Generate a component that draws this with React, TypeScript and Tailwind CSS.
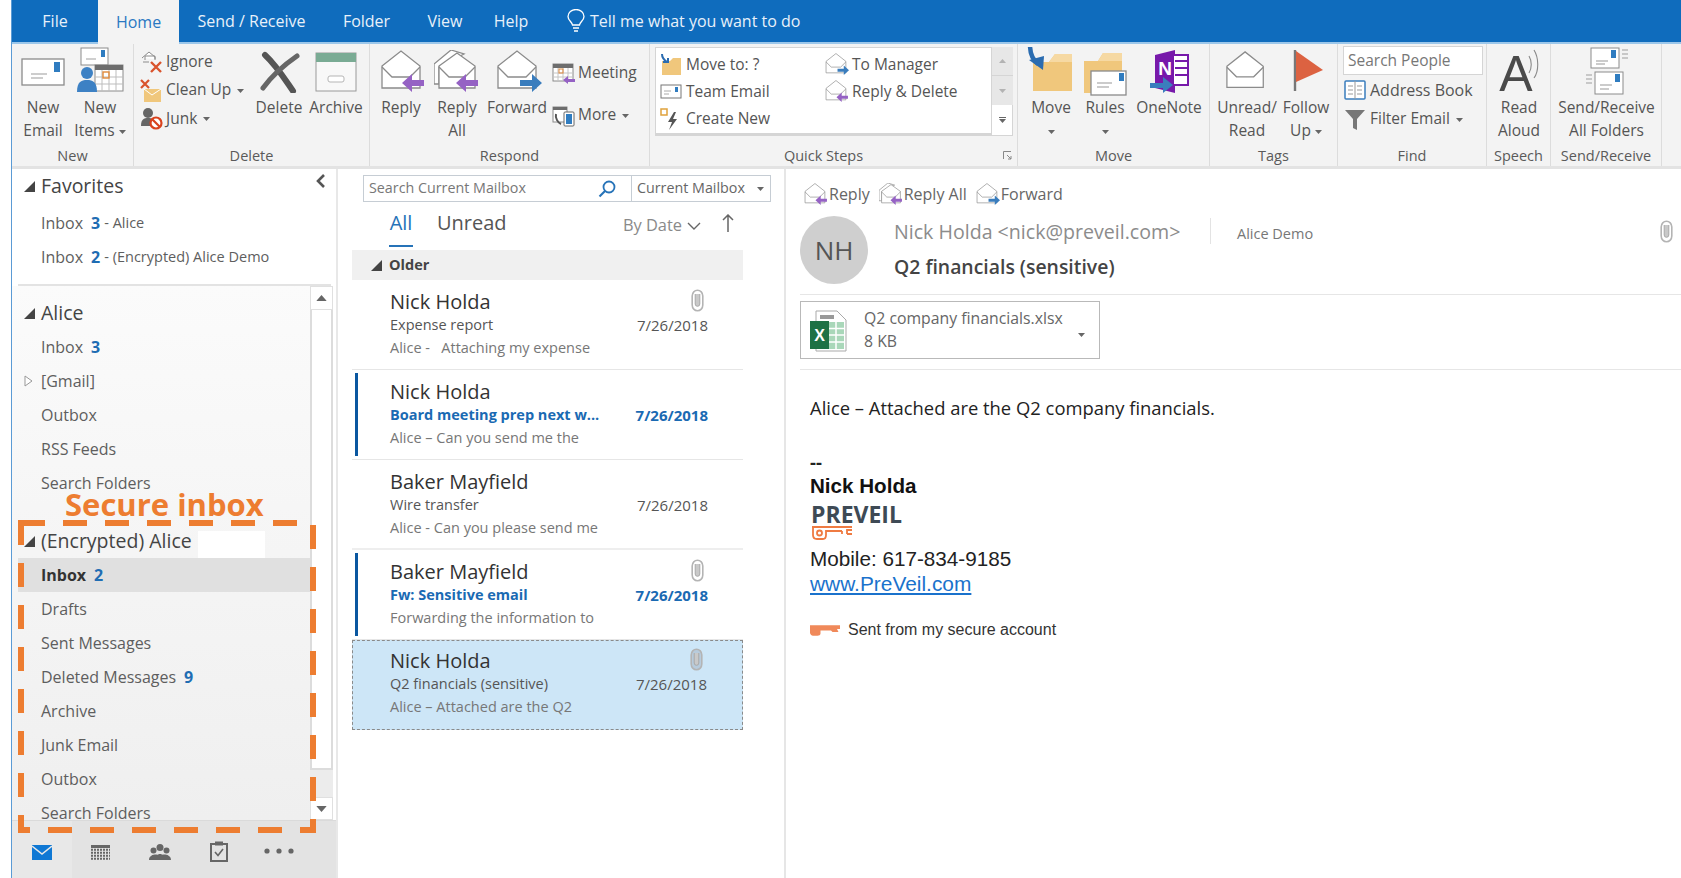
import React from "react";

const GRAY = "#8b8b8b";

function OpenEnv({ w = 46, h = 44, color = "#9562c4", dir = "left", double = false }: { w?: number; h?: number; color?: string; dir?: "left" | "right"; double?: boolean }) {
  return (
    <svg width={w} height={h} viewBox="0 0 46 44" className="shrink-0">
      {double && <path d="M0 14 L17 0 L30 4 L5 17 V34 H0 Z" fill="#fff" stroke={GRAY} strokeWidth="1.3" />}
      <path d={double ? "M5 16 L23 3 L41 16 V38 H5 Z" : "M2 16 L21 1 L40 16 V38 H2 Z"} fill="#fff" stroke={GRAY} strokeWidth="1.3" />
      <path d={double ? "M5 17 L15 27 H31 L41 17" : "M2 17 L12 27 H30 L40 17"} fill="none" stroke={GRAY} strokeWidth="1.3" />
      {dir === "left" ? (
        <path d="M22 33 L32 24 V30 H44 V36 H32 V42 Z" fill={color} />
      ) : (
        <path d="M46 33 L36 24 V30 H24 V36 H36 V42 Z" fill={color} />
      )}
    </svg>
  );
}

function ClosedEnv({ w = 44, h = 28 }: { w?: number; h?: number }) {
  return (
    <svg width={w} height={h} viewBox="0 0 44 28" className="shrink-0">
      <rect x="1" y="1" width="42" height="26" fill="#fff" stroke={GRAY} strokeWidth="1.3" />
      <rect x="33" y="4" width="6" height="10" fill="#2f7cc0" />
      <path d="M10 16 H26 M10 20 H22" stroke="#bdbdbd" strokeWidth="1.4" />
    </svg>
  );
}

function NewItemsIcon() {
  return (
    <svg width="48" height="50" viewBox="0 0 48 50">
      <rect x="5" y="1" width="27" height="17" fill="#fff" stroke={GRAY} />
      <rect x="25" y="3" width="4" height="7" fill="#2f7cc0" />
      <path d="M10 12 H20" stroke="#bbb" strokeWidth="1.4" />
      <rect x="19" y="18" width="28" height="26" fill="#fff" stroke={GRAY} />
      <rect x="19" y="18" width="28" height="5" fill="#6d6d6d" />
      <path d="M19 30 H47 M19 37 H47 M26 23 V44 M33 23 V44 M40 23 V44" stroke="#bdbdbd" />
      <rect x="27" y="25" width="6" height="6" fill="none" stroke="#e08a3c" strokeWidth="1.4" />
      <circle cx="11" cy="26" r="6" fill="#3d81c4" />
      <path d="M1 45 C1 35 5 33 11 33 C17 33 21 35 21 45 Z" fill="#3d81c4" />
    </svg>
  );
}

function Small({ children }: { children: React.ReactNode }) {
  return (
    <svg width="24" height="24" viewBox="0 0 24 24" className="shrink-0">
      {children}
    </svg>
  );
}

const IgnoreIcon = () => (
  <Small>
    <path d="M2 9 L9 3 L15 8 V10" fill="#fff" stroke={GRAY} />
    <path d="M5 11 V7 H15 V11 M3 13 H9" fill="none" stroke={GRAY} />
    <path d="M11 13 L21 23 M21 13 L11 23" stroke="#d9532c" strokeWidth="2.4" />
  </Small>
);
const CleanIcon = () => (
  <Small>
    <path d="M4 11 H21 V24 H4 Z" fill="#f0c77c" />
    <path d="M4 11 L12 17 L21 11" fill="none" stroke="#fff" strokeWidth="1" />
    <path d="M1 2 L9 10 M9 2 L1 10" stroke="#d9532c" strokeWidth="2.2" />
  </Small>
);
const JunkIcon = () => (
  <Small>
    <circle cx="8" cy="7" r="5" fill="#666" />
    <path d="M1 20 C1 13 4 12 8 12 C12 12 15 13 15 20 Z" fill="#666" />
    <circle cx="16" cy="17" r="5.5" fill="#fff" stroke="#d9431e" strokeWidth="2.2" />
    <path d="M12.5 13.5 L19.5 20.5" stroke="#d9431e" strokeWidth="2.2" />
  </Small>
);
const MeetingIcon = () => (
  <Small>
    <rect x="1" y="3" width="20" height="17" fill="#fff" stroke="#8a8a8a" />
    <rect x="1" y="3" width="20" height="4" fill="#6d6d6d" />
    <path d="M1 12 H21 M1 16 H21 M6 7 V20 M11 7 V20 M16 7 V20" stroke="#c4c4c4" />
    <rect x="7" y="8" width="4" height="4" fill="none" stroke="#e08a3c" />
    <path d="M11 19 L16 15 V18 H23 V21 H16 V23 Z" fill="#9562c4" />
  </Small>
);
const MoreIcon = () => (
  <Small>
    <rect x="1" y="4" width="14" height="15" fill="#fff" stroke="#8a8a8a" />
    <rect x="1" y="4" width="14" height="3" fill="#6d6d6d" />
    <path d="M4 11 C3 15 6 20 9 21" fill="none" stroke="#555" strokeWidth="2" />
    <rect x="12" y="9" width="10" height="14" rx="1" fill="#fff" stroke="#666" />
    <rect x="14" y="11" width="6" height="10" fill="#2f7cc0" />
  </Small>
);

function MoveIcon() {
  return (
    <svg width="52" height="50" viewBox="0 0 52 50">
      <path d="M8 44 V15 H24 L30 7 H47 V44 Z" fill="#f0c77c" />
      <path d="M30 7 H47 V15 H24 Z" fill="#f6d9a3" />
      <path d="M5 -2 C5 8 8 13 13 17" fill="none" stroke="#2b6cb0" strokeWidth="4.5" />
      <path d="M4 13 L18 23 L19 9 Z" fill="#2b6cb0" />
    </svg>
  );
}
function RulesIcon() {
  return (
    <svg width="46" height="50" viewBox="0 0 46 50">
      <path d="M2 46 V14 H16 L21 6 H40 V46 Z" fill="#f0c77c" />
      <path d="M21 6 H40 V14 H16 Z" fill="#f6d9a3" />
      <rect x="9" y="24" width="35" height="24" fill="#fff" stroke="#8a8a8a" strokeWidth="1.3" />
      <rect x="37" y="26" width="5" height="8" fill="#2f7cc0" />
      <path d="M15 36 H30 M15 40 H27" stroke="#bbb" strokeWidth="1.4" />
    </svg>
  );
}
function OneNoteIcon() {
  return (
    <svg width="44" height="50" viewBox="0 0 44 50">
      <path d="M8 8 L28 3 V46 L8 41 Z" fill="#7719aa" />
      <path d="M26 8 H41 V38 H26 Z" fill="#fff" stroke="#7719aa" strokeWidth="2" />
      <path d="M28 14 H41 M28 21 H41 M28 28 H41" stroke="#7719aa" strokeWidth="2" />
      <text x="18" y="28" textAnchor="middle" fontFamily="Liberation Sans" fontWeight="700" fontSize="19" fill="#fff">N</text>
      <path d="M3 36 H16 V30 L26 38 L16 46 V41 H3 Z" fill="#3a7dbd" />
    </svg>
  );
}
function FlagIcon() {
  return (
    <svg width="34" height="44" viewBox="0 0 34 44" className="ml-[6px]">
      <path d="M3 0 V41" stroke="#777" strokeWidth="2.4" />
      <path d="M4 1 L31 20 L4 32 Z" fill="#dc6241" />
    </svg>
  );
}
function ReadAloudIcon() {
  return (
    <svg width="48" height="50" viewBox="0 0 48 50" overflow="visible">
      <text x="21" y="44" textAnchor="middle" fontFamily="Liberation Sans" fontSize="50" fill="#4a4a4a">A</text>
      <path d="M34 9 C37 14 37 21 34 26 M39 3 C44 11 44 24 39 31" fill="none" stroke="#888" strokeWidth="1.1" />
    </svg>
  );
}
function SendReceiveIcon() {
  return (
    <svg width="50" height="50" viewBox="0 0 50 50">
      <rect x="9" y="1" width="28" height="20" fill="#fff" stroke={GRAY} />
      <rect x="29" y="3" width="5" height="8" fill="#2f7cc0" />
      <path d="M14 14 H26 M14 17 H23 M40 3 H46 M40 7 H46 M40 11 H46" stroke="#bbb" strokeWidth="1.3" />
      <rect x="13" y="25" width="28" height="22" fill="#fff" stroke={GRAY} />
      <rect x="33" y="27" width="5" height="8" fill="#2f7cc0" />
      <path d="M18 38 H30 M18 42 H27 M4 28 H10 M4 32 H10 M4 36 H10" stroke="#bbb" strokeWidth="1.3" />
    </svg>
  );
}
function ArchiveIcon() {
  return (
    <svg width="42" height="40" viewBox="0 0 42 40">
      <rect x="1" y="1" width="40" height="38" fill="#f8f8f8" stroke="#9a9a9a" />
      <rect x="1" y="1" width="40" height="9" fill="#7aab94" />
      <rect x="13" y="24" width="16" height="6" rx="2" fill="#fff" stroke="#b5b5b5" />
    </svg>
  );
}
function DeleteIcon() {
  return (
    <svg width="42" height="42" viewBox="0 0 42 42">
      <path d="M7 4 C18 14 26 27 35 40" stroke="#555" strokeWidth="6" fill="none" strokeLinecap="round" />
      <path d="M39 5 C26 14 13 26 5 37" stroke="#666" strokeWidth="5" fill="none" strokeLinecap="round" />
    </svg>
  );
}
const Caret = ({ cls = "" }: { cls?: string }) => (
  <svg width="7" height="4" viewBox="0 0 7 4" className={`inline-block ${cls}`}>
    <path d="M0 0 H7 L3.5 4 Z" fill="#666" />
  </svg>
);

function Big({ w, icon, lines, iconCls = "" }: { w: string; icon: React.ReactNode; lines: React.ReactNode[]; iconCls?: string }) {
  return (
    <div className={`${w} flex flex-col items-center shrink-0`}>
      <div className={`h-[49px] flex items-center justify-center ${iconCls}`}>{icon}</div>
      {lines.map((l, i) => (
        <div key={i} className="leading-[23px] whitespace-nowrap text-center">
          {l}
        </div>
      ))}
    </div>
  );
}

function Group({ w, label, children, last = false, launcher = false, labelCls = "" }: { w: string; label: string; children: React.ReactNode; last?: boolean; launcher?: boolean; labelCls?: string }) {
  return (
    <div className={`${w} h-full flex flex-col shrink-0 relative ${last ? "" : "border-r border-[#dcdcdc]"}`}>
      <div className="flex-1 flex pt-[3px]">{children}</div>
      <div className={`h-[22px] leading-[23px] text-center text-[14.5px] text-[#5a5a5a] ${labelCls}`}>{label}</div>
      {launcher && (
        <svg width="9" height="9" viewBox="0 0 9 9" className="absolute right-[5px] bottom-[6px]">
          <path d="M0.5 8 V0.5 H8 M4 4 L8 8 M8 5 V8 H5" fill="none" stroke="#888" />
        </svg>
      )}
    </div>
  );
}

function Mini({ icon, children, cls = "" }: { icon: React.ReactNode; children: React.ReactNode; cls?: string }) {
  return (
    <div className={`flex items-center h-[27px] gap-[2px] whitespace-nowrap ${cls}`}>
      {icon}
      <span>{children}</span>
    </div>
  );
}

function Ribbon() {
  return (
    <div className="h-[122px] bg-[#f3f3f3] flex text-[15.5px] text-[#555] shrink-0">
      <Group w="w-[122px]" label="New">
        <div className="flex pl-[5px]">
          <Big w="w-[52px]" icon={<ClosedEnv />} lines={["New", "Email"]} />
          <Big w="w-[62px]" icon={<NewItemsIcon />} lines={["New", <>Items <Caret cls="align-middle" /></>]} />
        </div>
      </Group>
      <Group w="w-[236px]" label="Delete">
        <div className="w-[120px] pl-[6px] shrink-0">
          <Mini icon={<IgnoreIcon />} cls="h-[28.5px]">Ignore</Mini>
          <Mini icon={<CleanIcon />} cls="h-[28.5px]">Clean Up <Caret cls="align-middle ml-[2px]" /></Mini>
          <Mini icon={<JunkIcon />} cls="h-[28.5px]">Junk <Caret cls="align-middle ml-[2px]" /></Mini>
        </div>
        <Big w="w-[50px]" icon={<DeleteIcon />} lines={["Delete"]} />
        <Big w="w-[64px]" icon={<ArchiveIcon />} lines={["Archive"]} />
      </Group>
      <Group w="w-[280px]" label="Respond">
        <div className="flex pl-[3px]">
          <Big w="w-[56px]" icon={<OpenEnv />} lines={["Reply"]} iconCls="ml-[3px]" />
          <Big w="w-[56px]" icon={<OpenEnv double />} lines={["Reply", "All"]} />
          <Big w="w-[64px]" icon={<OpenEnv dir="right" color="#3a7dbd" />} lines={["Forward"]} iconCls="ml-[3px]" />
          <div className="pl-[3px] pt-[12px]">
            <Mini icon={<MeetingIcon />} cls="mb-[15px]">Meeting</Mini>
            <Mini icon={<MoreIcon />}>More <Caret cls="align-middle ml-[2px]" /></Mini>
          </div>
        </div>
      </Group>
      <Group w="w-[368px]" label="Quick Steps" launcher labelCls="pr-[20px]">
        <div className="ml-[5px] w-[358px] h-[89px] flex">
          <div className="flex-1 bg-white border border-[#d5d5d5] border-b-[3px] grid grid-cols-[166px_1fr] content-start pt-[3px] pl-[3px] text-[15.5px]">
            <Mini icon={<Small><path d="M3 8 H11 L14 5 H22 V22 H3 Z" fill="#f0c77c" /><path d="M3 1 C3 5 5 7 8 9 M4 9 H9 V5" fill="none" stroke="#2b6cb0" strokeWidth="2" /></Small>} cls="gap-[3px]">Move to: ?</Mini>
            <Mini icon={<OpenEnv w={24} h={23} dir="right" color="#3a7dbd" />} cls="gap-[3px]">To Manager</Mini>
            <Mini icon={<Small><rect x="2" y="5" width="20" height="13" fill="#fff" stroke="#777" /><rect x="16" y="7" width="3" height="5" fill="#2f7cc0" /><path d="M5 11 H12 M5 14 H10" stroke="#aaa" /></Small>} cls="gap-[3px]">Team Email</Mini>
            <Mini icon={<OpenEnv w={24} h={23} />} cls="gap-[3px]">Reply &amp; Delete</Mini>
            <Mini icon={<Small><rect x="2" y="2" width="6" height="6" fill="none" stroke="#e0a23c" strokeWidth="1.5" /><path d="M15 5 L9 15 H13 L10 23 L18 12 H14 L17 5 Z" fill="#555" /></Small>} cls="gap-[3px]">Create New</Mini>
          </div>
          <div className="w-[21px] flex flex-col">
            <div className="h-[29px] bg-[#e7e7e7] border-b border-[#d5d5d5] flex items-center justify-center"><Caret cls="rotate-180 opacity-40" /></div>
            <div className="h-[29px] bg-[#e7e7e7] flex items-center justify-center"><Caret cls="opacity-40" /></div>
            <div className="h-[31px] bg-white border-b border-r border-[#d5d5d5] flex flex-col gap-[1px] items-center justify-center">
              <div className="w-[7px] h-[1px] bg-[#666]" />
              <Caret />
            </div>
          </div>
        </div>
      </Group>
      <Group w="w-[192px]" label="Move">
        <div className="flex pl-[5px]">
          <Big w="w-[56px]" icon={<MoveIcon />} lines={["Move", <Caret />]} />
          <Big w="w-[52px]" icon={<RulesIcon />} lines={["Rules", <Caret />]} />
          <Big w="w-[76px]" icon={<OneNoteIcon />} lines={["OneNote"]} />
        </div>
      </Group>
      <Group w="w-[128px]" label="Tags">
        <div className="flex pl-[4px]">
          <Big w="w-[66px]" icon={<OpenEnv w={44} h={44} color="transparent" />} lines={["Unread/", "Read"]} />
          <Big w="w-[52px]" icon={<FlagIcon />} lines={["Follow", <>Up <Caret cls="align-middle" /></>]} />
        </div>
      </Group>
      <Group w="w-[149px]" label="Find">
        <div className="pl-[5px]">
          <div className="w-[140px] h-[29px] -mt-[1px] bg-white border border-[#d5d5d5] px-[4px] leading-[26px] text-[#777] text-[15.5px]">Search People</div>
          <Mini icon={<Small><rect x="2" y="3" width="20" height="18" rx="1" fill="#fff" stroke="#3a7dbd" strokeWidth="1.5" /><path d="M12 3 V21 M5 8 H10 M5 12 H10 M5 16 H10 M14 8 H19 M14 12 H19 M14 16 H19" stroke="#999" /></Small>} cls="mt-[1px] gap-[3px] text-[16px]">Address Book</Mini>
          <Mini icon={<Small><path d="M2 3 H22 L14 12 V23 L10 21 V12 Z" fill="#777" /></Small>} cls="gap-[3px] mt-[2px]">Filter Email <Caret cls="align-middle ml-[2px]" /></Mini>
        </div>
      </Group>
      <Group w="w-[64px]" label="Speech">
        <Big w="w-[64px]" icon={<ReadAloudIcon />} lines={["Read", "Aloud"]} />
      </Group>
      <Group w="w-[111px]" label="Send/Receive">
        <Big w="w-[111px]" icon={<SendReceiveIcon />} lines={["Send/Receive", "All Folders"]} />
      </Group>
    </div>
  );
}

function TabBar() {
  return (
    <div className="h-[44px] bg-[#0f6cbd] border-b-2 border-[#9cc7ea] flex text-[16px] text-[#e8f1fa] shrink-0">
      <div className="w-[86px] h-[42px] flex items-center justify-center">File</div>
      <div className="w-[81px] h-[44px] bg-[#f3f3f3] text-[#2a78c2] flex items-center justify-center">Home</div>
      <div className="w-[145px] flex items-center justify-center">Send / Receive</div>
      <div className="w-[85px] flex items-center justify-center">Folder</div>
      <div className="w-[72px] flex items-center justify-center">View</div>
      <div className="w-[60px] flex items-center justify-center">Help</div>
      <div className="ml-[25px] flex items-center gap-[4px]">
        <svg width="20" height="24" viewBox="0 0 20 24">
          <path d="M6.5 16 C6 12.5 2 11.5 2 7.5 A8 7 0 0 1 18 7.5 C18 11.5 14 12.5 13.5 16 Z" fill="none" stroke="#fff" strokeWidth="1.3" />
          <path d="M7 19 H13 M8 22 H12" stroke="#fff" strokeWidth="1.4" />
        </svg>
        <span>Tell me what you want to do</span>
      </div>
    </div>
  );
}

function Tri() {
  return (
    <svg width="11" height="11" viewBox="0 0 11 11" className="shrink-0">
      <path d="M11 0 V11 H0 Z" fill="#444" />
    </svg>
  );
}

const Count = ({ n }: { n: number }) => <span className="font-bold text-[#1f6db3] ml-[8px]">{n}</span>;

function Head({ children, extra }: { children: React.ReactNode; extra?: React.ReactNode }) {
  return (
    <div className="h-[34px] flex items-center pl-[12px] text-[19.5px] text-[#444] gap-[6px] shrink-0">
      <Tri />
      <span>{children}</span>
      {extra}
    </div>
  );
}
function Item({ children, sel = false, gmail = false }: { children: React.ReactNode; sel?: boolean; gmail?: boolean }) {
  return (
    <div className={`h-[34px] flex items-center shrink-0 text-[16px] whitespace-nowrap ${sel ? "bg-[#e0e0e0] ml-[6px] pl-[23px] text-[#333] font-bold" : "pl-[29px] text-[#5e5e5e]"} relative`}>
      {gmail && (
        <svg width="9" height="12" viewBox="0 0 9 12" className="absolute left-[12px]">
          <path d="M1 1 L8 6 L1 11 Z" fill="#fff" stroke="#999" />
        </svg>
      )}
      {children}
    </div>
  );
}

function Nav() {
  return (
    <div className="w-[326px] shrink-0 flex flex-col border-r-2 border-[#e8e8e8] h-full">
      <div className="h-[115px] shrink-0 relative">
        <div className="h-[36px]"><Head>Favorites</Head></div>
        <svg width="10" height="14" viewBox="0 0 10 14" className="absolute right-[10px] top-[5px]">
          <path d="M8 1 L2 7 L8 13" fill="none" stroke="#555" strokeWidth="2.6" />
        </svg>
        <div className="pt-[1px]">
          <Item>Inbox<Count n={3} /><span className="text-[14.5px] ml-[4px]">- Alice</span></Item>
          <Item>Inbox<Count n={2} /><span className="text-[14.5px] ml-[4px]">- (Encrypted) Alice Demo</span></Item>
        </div>
      </div>
      <div className="h-[2px] bg-[#e3e3e3] ml-[6px] mr-[5px] shrink-0" />
      <div className="flex-1 flex min-h-0">
        <div className="w-[298px] bg-linear-to-b from-[#fbfbfb] to-[#efefef] overflow-hidden pt-[10px] flex flex-col shrink-0">
          <Head>Alice</Head>
          <Item>Inbox<Count n={3} /></Item>
          <Item gmail>[Gmail]</Item>
          <Item>Outbox</Item>
          <Item>RSS Feeds</Item>
          <Item>Search Folders</Item>
          <div className="h-[24px] shrink-0" />
          <Head extra={<span className="w-[67px] h-[27px] bg-white self-end" />}>(Encrypted) Alice</Head>
          <Item sel>Inbox<Count n={2} /></Item>
          <Item>Drafts</Item>
          <Item>Sent Messages</Item>
          <Item>Deleted Messages<Count n={9} /></Item>
          <Item>Archive</Item>
          <Item>Junk Email</Item>
          <Item>Outbox</Item>
          <Item>Search Folders</Item>
        </div>
        <div className="w-[23px] flex flex-col shrink-0 bg-[#ececec]">
          <div className="h-[24px] bg-white border border-[#e0e0e0] flex items-center justify-center"><Caret cls="rotate-180 scale-150" /></div>
          <div className="flex-1 bg-white border-x-2 border-b-2 border-[#dcdcdc]" />
          <div className="h-[27px]" />
          <div className="h-[23px] bg-white border border-[#e0e0e0] flex items-center justify-center"><Caret cls="scale-150" /></div>
        </div>
      </div>
      <div className="h-[58px] bg-[#e3e3e3] flex shrink-0 border-t border-[#dadada]">
        <div className="w-[60px] bg-[#e8e8e8] flex justify-center pt-[24px]">
          <svg width="20" height="15" viewBox="0 0 20 15"><rect width="20" height="15" fill="#0f78d4" /><path d="M0 1 L10 9 L20 1" fill="none" stroke="#e8e8e8" strokeWidth="1.5" /></svg>
        </div>
        <div className="w-[56px] flex justify-center pt-[24px]">
          <svg width="19" height="15" viewBox="0 0 19 15"><rect width="19" height="3" fill="#666" />{[4, 7, 10, 13].map((y) => <path key={y} d={`M0 ${y + 0.8} H19`} stroke="#666" strokeWidth="2" strokeDasharray="2 1" />)}</svg>
        </div>
        <div className="w-[64px] flex justify-center pt-[23px]">
          <svg width="22" height="16" viewBox="0 0 22 16" fill="#666"><circle cx="11" cy="3.5" r="3.5" /><circle cx="4.5" cy="6.5" r="3" /><circle cx="17.5" cy="6.5" r="3" /><path d="M0 16 C0 10 8 10 9 11 L9 16 Z M13 16 V11 C14 10 22 10 22 16 Z M6 16 C6 8 16 8 16 16 Z" /></svg>
        </div>
        <div className="w-[54px] flex justify-center pt-[20px]">
          <svg width="18" height="21" viewBox="0 0 18 21"><rect x="1" y="3" width="16" height="17" fill="none" stroke="#666" strokeWidth="2" /><rect x="5" y="0.5" width="8" height="4" fill="#666" /><path d="M5 11 L8 14.5 L13 8" fill="none" stroke="#666" strokeWidth="1.6" /></svg>
        </div>
        <div className="w-[66px] flex justify-center pt-[27px]">
          <svg width="30" height="6" viewBox="0 0 30 6" fill="#666"><circle cx="3" cy="3" r="2.6" /><circle cx="15" cy="3" r="2.6" /><circle cx="27" cy="3" r="2.6" /></svg>
        </div>
      </div>
    </div>
  );
}

function Clip({ fill = "#fff" }: { fill?: string }) {
  return (
    <svg width="13" height="23" viewBox="0 0 13 23" className="shrink-0">
      <path d="M1.2 7 A5.3 5.8 0 0 1 11.8 7 V16 A5.3 5.8 0 0 1 1.2 16 Z" fill={fill} stroke="#b4b4b4" strokeWidth="1.6" />
      <path d="M4.2 5 V15 A2.3 2.3 0 0 0 8.8 15 V5" fill="#c9c9c9" stroke="#a9a9a9" />
    </svg>
  );
}

function Row({ name, subject, preview, clip = false, unread = false, selected = false, thick = false }: { name: string; subject: string; preview: string; clip?: boolean; unread?: boolean; selected?: boolean; thick?: boolean }) {
  return (
    <div className={`h-[90px] flex shrink-0 ${selected ? "bg-[#cde6f7] border border-dashed border-[#8a8a8a]" : thick ? "border-b-2 border-[#eeeeee]" : "border-b border-[#e6e6e6]"}`}>
      <div className={`${selected ? "w-[37px]" : "w-[38px]"} pl-[3px] py-[3px] shrink-0`}>
        {unread && <div className="w-[3px] h-full bg-[#0a57a0]" />}
      </div>
      <div className={`flex-1 pr-[35px] ${selected ? "pt-[6px]" : "pt-[8px]"} min-w-0`}>
        <div className="h-[28px] flex justify-between items-center">
          <span className="text-[20px] text-[#333] leading-[28px]">{name}</span>
          {clip && <span className="mr-[4px] -mt-[3px]"><Clip fill={selected ? "#b7cbdc" : "#fff"} /></span>}
        </div>
        <div className="h-[22px] -mt-[2px] flex justify-between items-center text-[14.5px] leading-[22px] whitespace-nowrap">
          <span className={unread ? "font-bold text-[#1a6ab3]" : "text-[#555]"}>{subject}</span>
          <span className={`text-[15px] ${unread ? "font-bold text-[#1a6ab3]" : "text-[#555]"}`}>7/26/2018</span>
        </div>
        <div className="h-[22px] mt-[1px] text-[14.5px] leading-[22px] text-[#777] whitespace-pre">{preview}</div>
      </div>
    </div>
  );
}

function MessageList() {
  return (
    <div className="w-[446px] shrink-0 flex flex-col h-full">
      <div className="ml-[25px] mt-[6px] w-[408px] h-[27px] border border-[#c6cdd4] flex text-[14.3px] text-[#777] shrink-0">
        <div className="w-[268px] flex items-center justify-between pl-[5px] pr-[15px] border-r border-[#c6cdd4]">
          <span className="-mt-[2px]">Search Current Mailbox</span>
          <svg width="18" height="18" viewBox="0 0 18 18"><circle cx="11" cy="7" r="5.5" fill="none" stroke="#2673b8" strokeWidth="1.8" /><path d="M7 11 L1.5 16.5" stroke="#2673b8" strokeWidth="2.2" /></svg>
        </div>
        <div className="flex-1 flex items-center justify-between pl-[5px] pr-[6px] text-[#666]">
          <span className="-mt-[2px]">Current Mailbox</span>
          <Caret />
        </div>
      </div>
      <div className="h-[48px] ml-[51px] mr-[50px] flex shrink-0 relative">
        <div className="w-[24px] h-[45px] border-b-2 border-[#2673b8] text-[20px] text-[#2673b8] leading-[41px] text-center">All</div>
        <div className="ml-[24px] text-[20px] leading-[41px] text-[#555]">Unread</div>
        <div className="ml-auto flex items-start pt-[11px] text-[16.4px] text-[#8a8a8a] gap-[5px]">
          <span>By Date</span>
          <svg width="14" height="8" viewBox="0 0 14 8" className="mt-[9px]"><path d="M1 1 L7 7 L13 1" fill="none" stroke="#666" strokeWidth="1.4" /></svg>
          <svg width="12" height="18" viewBox="0 0 12 18" className="ml-[16px] mt-[1px]"><path d="M6 18 V1 M1 6 L6 1 L11 6" fill="none" stroke="#666" strokeWidth="1.5" /></svg>
        </div>
      </div>
      <div className="ml-[14px] w-[391px] flex flex-col">
        <div className="h-[30px] bg-[#f0f0f0] flex items-center pl-[19px] gap-[7px] text-[14.5px] font-bold text-[#444] shrink-0">
          <Tri />
          <span>Older</span>
        </div>
        <Row name="Nick Holda" subject="Expense report" preview="Alice -   Attaching my expense" clip />
        <Row name="Nick Holda" subject="Board meeting prep next w..." preview="Alice – Can you send me the" unread />
        <Row name="Baker Mayfield" subject="Wire transfer" preview="Alice - Can you please send me" thick />
        <Row name="Baker Mayfield" subject="Fw: Sensitive email" preview="Forwarding the information to" clip unread />
        <Row name="Nick Holda" subject="Q2 financials (sensitive)" preview="Alice – Attached are the Q2" clip selected />
      </div>
    </div>
  );
}

function PreveilKey({ w = 40, h = 14, solid = false }: { w?: number; h?: number; solid?: boolean }) {
  return (
    <svg width={w} height={h} viewBox="0 0 40 14" className="shrink-0">
      {solid ? (
        <path d="M0 0 H40 V5 H36 L38 9 H30 L28 7 H14 V11 C14 13 12 14 10 14 H4 C2 14 0 12 0 10 Z" fill="#f0895a" />
      ) : (
        <g fill="none" stroke="#ef7b42" strokeWidth="1.8">
          <path d="M0 1 H40" />
          <path d="M1 1 V9 C1 12 3 13 5 13 H11 C13 13 14 11 14 9 V5 H30 M40 4 H35 V8 M40 8 H35 M30 5 V8" />
          <circle cx="7.5" cy="7" r="2.5" />
        </g>
      )}
    </svg>
  );
}

function Reading() {
  return (
    <div className="flex-1 min-w-0 h-full border-l-2 border-[#e6e6e6] flex flex-col">
      <div className="h-[36px] mt-[7px] pl-[18px] flex items-center gap-[9px] text-[16px] text-[#666] shrink-0">
        <span className="flex items-center gap-[1px]"><OpenEnv w={24} h={23} />Reply</span>
        <span className="flex items-center gap-[1px]"><OpenEnv w={24} h={23} double />Reply All</span>
        <span className="flex items-center gap-[1px]"><OpenEnv w={24} h={23} dir="right" color="#3a7dbd" />Forward</span>
      </div>
      <div className="ml-[14px] mt-[4px] h-[79px] border-b border-[#e6e6e6] flex shrink-0">
        <div className="w-[68px] h-[68px] rounded-full bg-[#cfcfcf] flex items-center justify-center text-[26px] text-[#555] shrink-0">NH</div>
        <div className="ml-[26px] w-[316px] shrink-0">
          <div className="h-[32px] leading-[32px] text-[19.6px] text-[#8c8c8c] whitespace-nowrap">Nick Holda &lt;nick@preveil.com&gt;</div>
          <div className="mt-[3px] h-[32px] leading-[32px] text-[19.4px] font-semibold text-[#444] whitespace-nowrap">Q2 financials (sensitive)</div>
        </div>
        <div className="h-[26px] w-[1px] bg-[#e3e3e3] mt-[2px]" />
        <div className="ml-[26px] h-[36px] leading-[36px] text-[14.5px] text-[#777]">Alice Demo</div>
        <div className="ml-auto mr-[8px] mt-[4px]"><Clip /></div>
      </div>
      <div className="ml-[14px] mt-[6px] w-[300px] h-[58px] border border-[#b9b9b9] flex shrink-0">
        <div className="pl-[9px] pt-[8px]">
          <svg width="38" height="42" viewBox="0 0 38 42">
            <path d="M6 1 H27 L36 10 V41 H6 Z" fill="#fff" stroke="#a9a9a9" />
            <path d="M10 5 H24 V9 H10 Z" fill="#999" />
            <rect x="18" y="12" width="16" height="27" fill="#a9d7b9" />
            <path d="M18 18.5 H34 M18 25 H34 M18 32 H34 M26 12 V39" stroke="#fff" strokeWidth="1.5" />
            <rect x="0" y="11" width="19" height="28" fill="#1e7145" />
            <text x="9.5" y="31" textAnchor="middle" fontFamily="Liberation Sans" fontWeight="700" fontSize="16" fill="#fff">X</text>
          </svg>
        </div>
        <div className="ml-[16px] pt-[5px] w-[214px] text-[15.8px] text-[#666] leading-[23px]">
          <div className="whitespace-nowrap">Q2 company financials.xlsx</div>
          <div>8 KB</div>
        </div>
        <div className="pt-[23px] leading-none"><Caret /></div>
      </div>
      <div className="mt-[10px] ml-[14px] border-t border-[#e6e6e6] pt-[26px] pl-[10px] shrink-0">
        <div className="leading-[23px] text-[18.4px] text-[#222]">Alice – Attached are the Q2 company financials.</div>
        <div className="mt-[31px] leading-[24px] text-[18.4px] font-bold text-[#222]">--</div>
        <div className="leading-[24px] text-[20.6px] font-bold text-[#111] font-['Liberation_Sans',Arial,sans-serif]">Nick Holda</div>
        <div className="mt-[5px] ml-[1px] h-[22px] leading-[22px] text-[23px] font-bold text-[#3e4a55]">PREVEIL</div>
        <div className="mt-[1px] ml-[2px] h-[14px]"><PreveilKey /></div>
        <div className="mt-[7px] leading-[24px] text-[20.7px] text-[#222] font-['Liberation_Sans',Arial,sans-serif]">Mobile: 617-834-9185</div>
        <div className="mt-[1px] leading-[24px] text-[20.9px] text-[#1a72cc] underline font-['Liberation_Sans',Arial,sans-serif]">www.PreVeil.com</div>
        <div className="mt-[24px] h-[20px] flex items-center gap-[8px] text-[16px] text-[#333] font-['Liberation_Sans',Arial,sans-serif]">
          <PreveilKey w={30} h={11} solid />
          <span>Sent from my secure account</span>
        </div>
      </div>
    </div>
  );
}

export default function App() {
  return (
    <div className="w-[1681px] h-[878px] bg-white flex overflow-hidden relative font-['Open_Sans','Noto_Sans',sans-serif]">
      <div className="w-[11px] shrink-0 bg-white" />
      <div className="flex-1 min-w-0 flex flex-col border-l border-[#5b9bd5]">
        <TabBar />
        <Ribbon />
        <div className="h-[3px] bg-[#e3e3e3] shrink-0" />
        <div className="flex-1 flex min-h-0">
          <Nav />
          <MessageList />
          <Reading />
        </div>
      </div>
      <div className="absolute left-[65px] top-[484px] text-[31px] leading-[40px] font-bold text-[#ed7d31] whitespace-nowrap">Secure inbox</div>
      <svg width="306" height="320" viewBox="0 0 306 320" className="absolute left-[15px] top-[517px] pointer-events-none">
        <rect x="6" y="6" width="292" height="307" fill="none" stroke="#ed7d31" strokeWidth="6" strokeDasharray="24 18" />
      </svg>
    </div>
  );
}
